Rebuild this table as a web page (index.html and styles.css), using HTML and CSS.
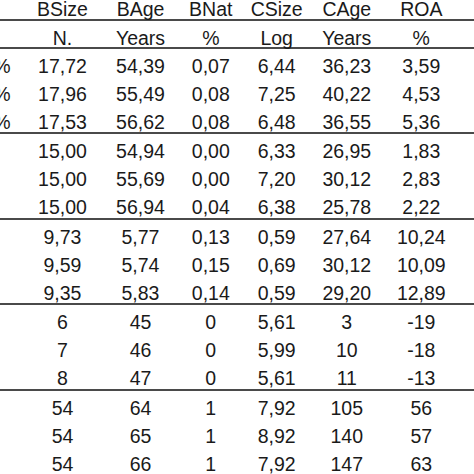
FILE: index.html
```html
<!DOCTYPE html>
<html lang="en">
<head>
<meta charset="utf-8">
<title>Descriptive statistics</title>
<link rel="stylesheet" href="styles.css">
</head>
<body>
<div class="table">
  <div class="head head-top">
    <div class="row">
      <div class="cell label"></div>
      <div class="cell c1">BSize</div>
      <div class="cell c2">BAge</div>
      <div class="cell c3">BNat</div>
      <div class="cell c4">CSize</div>
      <div class="cell c5">CAge</div>
      <div class="cell c6">ROA</div>
    </div>
  </div>
  <div class="head head-units">
    <div class="row">
      <div class="cell label"></div>
      <div class="cell c1">N.</div>
      <div class="cell c2">Years</div>
      <div class="cell c3">%</div>
      <div class="cell c4">Log</div>
      <div class="cell c5">Years</div>
      <div class="cell c6">%</div>
    </div>
  </div>

  <div class="group">
    <div class="row"><div class="cell label">25%</div><div class="cell c1">17,72</div><div class="cell c2">54,39</div><div class="cell c3">0,07</div><div class="cell c4">6,44</div><div class="cell c5">36,23</div><div class="cell c6">3,59</div></div>
    <div class="row"><div class="cell label">50%</div><div class="cell c1">17,96</div><div class="cell c2">55,49</div><div class="cell c3">0,08</div><div class="cell c4">7,25</div><div class="cell c5">40,22</div><div class="cell c6">4,53</div></div>
    <div class="row"><div class="cell label">75%</div><div class="cell c1">17,53</div><div class="cell c2">56,62</div><div class="cell c3">0,08</div><div class="cell c4">6,48</div><div class="cell c5">36,55</div><div class="cell c6">5,36</div></div>
  </div>

  <div class="group">
    <div class="row"><div class="cell label"></div><div class="cell c1">15,00</div><div class="cell c2">54,94</div><div class="cell c3">0,00</div><div class="cell c4">6,33</div><div class="cell c5">26,95</div><div class="cell c6">1,83</div></div>
    <div class="row"><div class="cell label"></div><div class="cell c1">15,00</div><div class="cell c2">55,69</div><div class="cell c3">0,00</div><div class="cell c4">7,20</div><div class="cell c5">30,12</div><div class="cell c6">2,83</div></div>
    <div class="row"><div class="cell label"></div><div class="cell c1">15,00</div><div class="cell c2">56,94</div><div class="cell c3">0,04</div><div class="cell c4">6,38</div><div class="cell c5">25,78</div><div class="cell c6">2,22</div></div>
  </div>

  <div class="group">
    <div class="row"><div class="cell label"></div><div class="cell c1">9,73</div><div class="cell c2">5,77</div><div class="cell c3">0,13</div><div class="cell c4">0,59</div><div class="cell c5">27,64</div><div class="cell c6">10,24</div></div>
    <div class="row"><div class="cell label"></div><div class="cell c1">9,59</div><div class="cell c2">5,74</div><div class="cell c3">0,15</div><div class="cell c4">0,69</div><div class="cell c5">30,12</div><div class="cell c6">10,09</div></div>
    <div class="row"><div class="cell label"></div><div class="cell c1">9,35</div><div class="cell c2">5,83</div><div class="cell c3">0,14</div><div class="cell c4">0,59</div><div class="cell c5">29,20</div><div class="cell c6">12,89</div></div>
  </div>

  <div class="group">
    <div class="row"><div class="cell label"></div><div class="cell c1">6</div><div class="cell c2">45</div><div class="cell c3">0</div><div class="cell c4">5,61</div><div class="cell c5">3</div><div class="cell c6">-19</div></div>
    <div class="row"><div class="cell label"></div><div class="cell c1">7</div><div class="cell c2">46</div><div class="cell c3">0</div><div class="cell c4">5,99</div><div class="cell c5">10</div><div class="cell c6">-18</div></div>
    <div class="row"><div class="cell label"></div><div class="cell c1">8</div><div class="cell c2">47</div><div class="cell c3">0</div><div class="cell c4">5,61</div><div class="cell c5">11</div><div class="cell c6">-13</div></div>
  </div>

  <div class="group">
    <div class="row"><div class="cell label"></div><div class="cell c1">54</div><div class="cell c2">64</div><div class="cell c3">1</div><div class="cell c4">7,92</div><div class="cell c5">105</div><div class="cell c6">56</div></div>
    <div class="row"><div class="cell label"></div><div class="cell c1">54</div><div class="cell c2">65</div><div class="cell c3">1</div><div class="cell c4">8,92</div><div class="cell c5">140</div><div class="cell c6">57</div></div>
    <div class="row"><div class="cell label"></div><div class="cell c1">54</div><div class="cell c2">66</div><div class="cell c3">1</div><div class="cell c4">7,92</div><div class="cell c5">147</div><div class="cell c6">63</div></div>
  </div>
</div>
</body>
</html>
```

FILE: styles.css
```css
html, body {
  margin: 0;
  padding: 0;
  background: #ffffff;
  overflow: hidden;
}

.table {
  width: 474px;
  font-family: "Liberation Sans", Arial, sans-serif;
  font-size: 19.5px;
  line-height: 1.15;
  color: #1a1a1a;
}

.row {
  display: flex;
  align-items: center;
  box-sizing: border-box;
  height: 27.83px;
  padding-top: 6.5px;
}

.head-top .row {
  height: 19px;
  padding-top: 0;
  line-height: 19px;
}

.head-units {
  border-top: 2px solid #4a4a4a;
}

.head-units .row {
  height: 26px;
  padding-top: 8px;
}

.group {
  border-top: 2px solid #4a4a4a;
}

.cell {
  flex: none;
  text-align: center;
  white-space: nowrap;
}

.label {
  width: 23.5px;
  box-sizing: border-box;
  padding-right: 13px;
  display: flex;
  justify-content: flex-end;
}

.c1 { width: 78px; }
.c2 { width: 78px; }
.c3 { width: 62.6px; }
.c4 { width: 69.2px; }
.c5 { width: 71px; }
.c6 { width: 78px; }
```
